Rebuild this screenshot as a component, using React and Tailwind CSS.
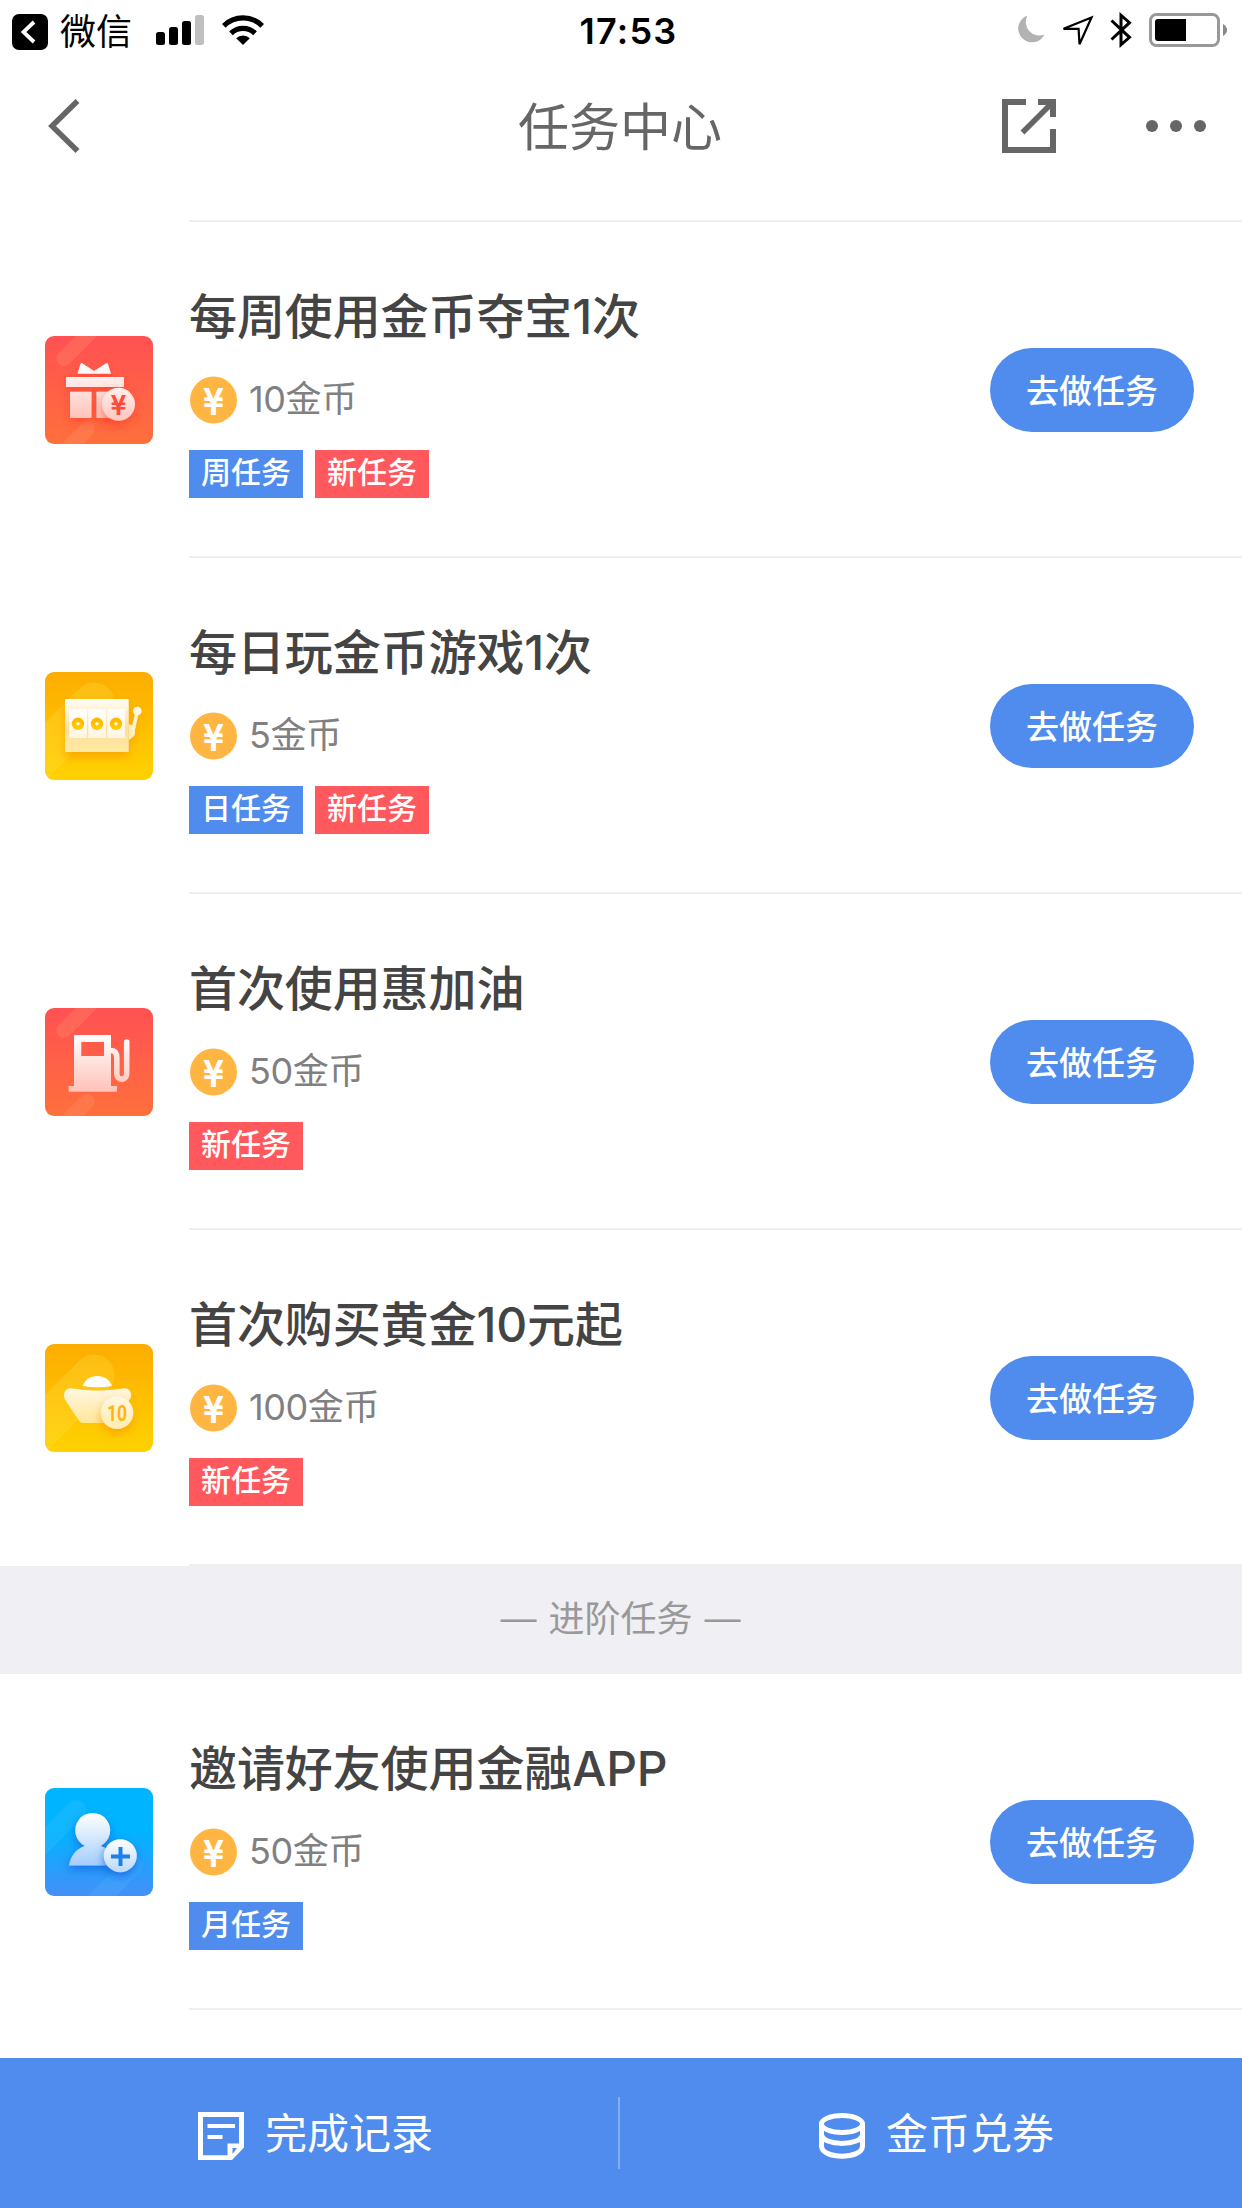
import React from 'react';

const tasks = [
  { title: '每周使用金币夺宝1次', coins: '10金币', icon: 'gift', tags: ['周任务', '新任务'] },
  { title: '每日玩金币游戏1次', coins: '5金币', icon: 'slot', tags: ['日任务', '新任务'] },
  { title: '首次使用惠加油', coins: '50金币', icon: 'fuel', tags: ['新任务'] },
  { title: '首次购买黄金10元起', coins: '100金币', icon: 'ingot', tags: ['新任务'] },
];

const advancedTasks = [
  { title: '邀请好友使用金融APP', coins: '50金币', icon: 'invite', tags: ['月任务'] },
];

// Gradients and shadows shared by all the task icons
const IconDefs = () => (
  <svg width="0" height="0" className="absolute">
    <defs>
      <linearGradient id="bgRed" x1="0" y1="0" x2="0" y2="1">
        <stop offset="0" stopColor="#ff5153" />
        <stop offset="1" stopColor="#ff703c" />
      </linearGradient>
      <linearGradient id="bgYellow" x1="0" y1="0" x2="0" y2="1">
        <stop offset="0" stopColor="#fdac00" />
        <stop offset="1" stopColor="#ffd200" />
      </linearGradient>
      <linearGradient id="bgBlue" x1="0" y1="0" x2="0" y2="1">
        <stop offset="0" stopColor="#00b4ff" />
        <stop offset="0.4" stopColor="#00b4ff" />
        <stop offset="1" stopColor="#458ff8" />
      </linearGradient>
      <linearGradient id="fgRed" gradientUnits="userSpaceOnUse" x1="0" y1="27" x2="0" y2="84">
        <stop offset="0" stopColor="#ffffff" />
        <stop offset="1" stopColor="#ffc1b8" />
      </linearGradient>
      <linearGradient id="fgYellow" gradientUnits="userSpaceOnUse" x1="0" y1="34" x2="0" y2="80">
        <stop offset="0" stopColor="#fffdf8" />
        <stop offset="1" stopColor="#ffe696" />
      </linearGradient>
      <linearGradient id="fgSlot" gradientUnits="userSpaceOnUse" x1="0" y1="27" x2="0" y2="80">
        <stop offset="0" stopColor="#fffdf8" />
        <stop offset="0.55" stopColor="#ffdfa0" />
        <stop offset="1" stopColor="#ffe9a0" />
      </linearGradient>
      <linearGradient id="reel" x1="0" y1="0" x2="0" y2="1">
        <stop offset="0" stopColor="#ffffff" />
        <stop offset="1" stopColor="#fff6e2" />
      </linearGradient>
      <linearGradient id="reelCoin" x1="0" y1="0" x2="0" y2="1">
        <stop offset="0" stopColor="#fdb400" />
        <stop offset="1" stopColor="#ffcf00" />
      </linearGradient>
      <linearGradient id="fgBlue" gradientUnits="userSpaceOnUse" x1="0" y1="25" x2="0" y2="78">
        <stop offset="0" stopColor="#ffffff" />
        <stop offset="1" stopColor="#a3cdfb" />
      </linearGradient>
      <linearGradient id="badgeBlue" x1="0" y1="0" x2="0" y2="1">
        <stop offset="0" stopColor="#ffffff" />
        <stop offset="1" stopColor="#b9d9fb" />
      </linearGradient>
      <linearGradient id="badgeRed" x1="0" y1="0" x2="0" y2="1">
        <stop offset="0" stopColor="#ffefec" />
        <stop offset="1" stopColor="#ffc6be" />
      </linearGradient>
      <linearGradient id="badgeYellow" x1="0" y1="0" x2="0" y2="1">
        <stop offset="0" stopColor="#fff7e3" />
        <stop offset="1" stopColor="#ffecad" />
      </linearGradient>
      <filter id="shadowRed" x="-40%" y="-40%" width="180%" height="190%">
        <feDropShadow dx="0" dy="4" stdDeviation="5" floodColor="#ff3a28" floodOpacity="0.6" />
      </filter>
      <filter id="shadowYellow" x="-40%" y="-40%" width="180%" height="190%">
        <feDropShadow dx="0" dy="5" stdDeviation="5" floodColor="#f89a00" floodOpacity="0.7" />
      </filter>
      <filter id="shadowBlue" x="-40%" y="-40%" width="180%" height="190%">
        <feDropShadow dx="0" dy="4" stdDeviation="5" floodColor="#1468e4" floodOpacity="0.85" />
      </filter>
    </defs>
  </svg>
);

const RedStripes = () => (
  <g stroke="#ff9a70" strokeOpacity="0.25" strokeWidth="15" strokeLinecap="round">
    <path d="M19 22.5L56 -14.5" />
    <path d="M42 93.5L14 121.5" />
  </g>
);

const YellowStripe = () => (
  <path d="M49 31L-30 110" stroke="#ffe04a" strokeOpacity="0.27" strokeWidth="41" strokeLinecap="round" />
);

const GiftIcon = () => (
  <>
    <rect width="108" height="108" fill="url(#bgRed)" />
    <RedStripes />
    <g fill="url(#fgRed)" filter="url(#shadowRed)">
      <path d="M32.5 37.8L35.5 28Q36.3 26 38 27.7L49 35L60.5 27.7Q62.3 26 63 28L66 37.8Z" />
      <rect x="21" y="41" width="58" height="10" rx="0.5" />
      <rect x="25" y="55.7" width="21.5" height="26.3" rx="0.5" />
      <rect x="51.5" y="55.7" width="23" height="26.3" rx="0.5" />
    </g>
    <circle cx="73.5" cy="68.3" r="16.5" fill="url(#badgeRed)" filter="url(#shadowRed)" />
    <text x="66" y="78.5" textLength="15" lengthAdjust="spacingAndGlyphs" fontSize="26" fontWeight="700" fontFamily="DejaVu Sans Mono, monospace" fill="#ff4a3c">¥</text>
  </>
);

const SlotIcon = () => (
  <>
    <rect width="108" height="108" fill="url(#bgYellow)" />
    <YellowStripe />
    <g filter="url(#shadowYellow)">
      <path d="M83.7 52L86.5 53.3L90 56V62Q89.5 64.5 83.7 68Z" fill="#ffeebf" />
      <path d="M92 41L88.3 57" stroke="#fff3d6" strokeWidth="3.4" />
      <circle cx="92.3" cy="39" r="4.3" fill="#fff8e8" />
      <rect x="20" y="27" width="63.7" height="53" rx="1" fill="url(#fgSlot)" />
    </g>
    {[24.3, 43.3, 62.3].map((x) => (
      <rect key={x} x={x} y="37" width="17.6" height="29" rx="0.5" fill="url(#reel)" />
    ))}
    {[33, 52, 71].map((x) => (
      <g key={x}>
        <circle cx={x} cy="51.8" r="6.2" fill="url(#reelCoin)" />
        <path d={`M${x} 50l1.8 1.8l-1.8 1.8l-1.8 -1.8z`} fill="#fff" stroke="#fff" strokeWidth="0.5" />
      </g>
    ))}
  </>
);

const FuelIcon = () => (
  <>
    <rect width="108" height="108" fill="url(#bgRed)" />
    <RedStripes />
    <path fillRule="evenodd" d="M29 27H66V78H72V83.7H23.7V78H29ZM36.3 34V48H59V34Z" fill="url(#fgRed)" />
    <path d="M66 42.5C70 42.5 71.8 45.5 71.8 50V65.5C71.8 73 81.7 73 81.7 65.5V34" fill="none" stroke="url(#fgRed)" strokeWidth="5.6" strokeLinecap="round" />
  </>
);

const IngotIcon = () => (
  <>
    <rect width="108" height="108" fill="url(#bgYellow)" />
    <YellowStripe />
    <path d="M37.8 42C40 35.5 45.5 32 52.3 32S64.6 35.5 67 42Q52.3 44.5 37.8 42Z" fill="#fff" />
    <path d="M26 44.3C35 45.5 40 46.5 52.5 46.5S70 45.5 79 44.3C85 43.8 87.5 50 85.5 54L72 77Q71 79 68.5 79H37.5Q35.5 79 34.2 77L20 55.5C17.5 50.5 20 44 26 44.3Z" fill="url(#fgYellow)" />
    <circle cx="72" cy="68.7" r="16.3" fill="url(#badgeYellow)" filter="url(#shadowYellow)" />
    <text x="62" y="77.2" textLength="20" lengthAdjust="spacingAndGlyphs" fontSize="22.5" fontWeight="700" fontFamily="Roboto, sans-serif" fill="#fdb515">10</text>
  </>
);

const InviteIcon = () => (
  <>
    <rect width="108" height="108" fill="url(#bgBlue)" />
    <g stroke="#62c8ff" strokeOpacity="0.17" strokeWidth="20" strokeLinecap="round">
      <path d="M31 22L-20 73" />
      <path d="M88 77L40 125" />
    </g>
    <path d="M24 77.5C25.5 68 31 61 39.8 58A17.5 17.5 0 1 1 55.6 58C65 61 71 68 72 77.5Z" fill="url(#fgBlue)" filter="url(#shadowBlue)" />
    <circle cx="75.3" cy="67.7" r="16.5" fill="url(#badgeBlue)" filter="url(#shadowBlue)" />
    <path d="M66 68.5H85M75.5 59V78" stroke="#1c7fec" strokeWidth="4" />
  </>
);

const icons = {
  gift: GiftIcon,
  slot: SlotIcon,
  fuel: FuelIcon,
  ingot: IngotIcon,
  invite: InviteIcon,
};

const StatusBar = () => (
  <div className="h-[60px] px-3 flex items-center relative text-black">
    <svg width="36" height="36" viewBox="0 0 36 36" className="mt-1">
      <rect width="36" height="36" rx="7" fill="#000" />
      <path d="M22 8L11.5 18L22 28" fill="none" stroke="#fff" strokeWidth="3.8" />
    </svg>
    <span className="ml-3 mt-1 text-[36px] leading-none">微信</span>
    <svg width="48" height="30" viewBox="0 0 48 30" className="ml-6">
      <rect x="0" y="17" width="9" height="13" rx="2.5" />
      <rect x="13" y="12" width="9" height="18" rx="2.5" />
      <rect x="26" y="6" width="9" height="24" rx="2.5" />
      <rect x="39" y="0" width="9" height="30" rx="2.5" fill="#bfbfbf" />
    </svg>
    <svg width="42" height="30" viewBox="0 0 42 30" className="ml-[18px]">
      <g fill="none" stroke="#000" strokeWidth="5.2">
        <path d="M1.8 10.8A27.3 27.3 0 0 1 40.2 10.8" />
        <path d="M9 18.3A17 17 0 0 1 33 18.3" />
      </g>
      <path d="M21 30L14.2 23.3A9.6 9.6 0 0 1 27.8 23.3Z" />
    </svg>
    <div className="absolute inset-x-0 top-0 h-[62px] flex items-center justify-center pl-[15px] text-[36px] font-semibold tracking-[1.2px]">17:53</div>
    <svg width="212" height="40" viewBox="0 0 212 40" className="ml-auto mr-0.5 mt-0.5">
      <path d="M11.5 4.5A13.8 13.8 0 1 0 28.5 23.5A13.5 13.5 0 0 1 11.5 4.5Z" fill="#b2b2b2" />
      <path d="M47.5 17.8L75.5 6.5L63.5 33.3L62.6 17.8Z" fill="none" stroke="#000" strokeWidth="2.2" />
      <path d="M95.5 9.5L113.5 26.3L105 33.8V4.2L113.5 11.7L95.5 28.5" fill="none" stroke="#000" strokeWidth="3" />
      <rect x="134.5" y="3.5" width="68" height="31" rx="6" fill="none" stroke="#999" strokeWidth="3" />
      <path d="M142 8H170V30H142Q139 30 139 27V11Q139 8 142 8Z" />
      <path d="M207 13Q211 15.5 211 19T207 25Z" fill="#8a8a8a" />
    </svg>
  </div>
);

const NavBar = () => (
  <div className="h-[132px] pl-12 pr-9 flex items-center justify-between relative">
    <svg width="33" height="54" viewBox="0 0 33 54" fill="none" stroke="#666" strokeWidth="5.5">
      <path d="M29.5 2L4 27L29.5 52" />
    </svg>
    <h1 className="absolute inset-0 pt-[4px] pr-0.5 flex items-center justify-center text-[51px] text-[#666] font-normal">任务中心</h1>
    <div className="flex items-center gap-[90px]">
      <svg width="54" height="54" viewBox="0 0 54 54" fill="none" stroke="#666" strokeWidth="6">
        <path d="M24 3H3V51H51V30" />
        <path d="M36 3H51V18" />
        <path d="M51 3L20.5 33.5" strokeWidth="5.5" />
      </svg>
      <svg width="60" height="12" viewBox="0 0 60 12" fill="#666">
        <circle cx="6" cy="6" r="6" />
        <circle cx="30" cy="6" r="6" />
        <circle cx="54" cy="6" r="6" />
      </svg>
    </div>
  </div>
);

const TaskRow = ({ task }) => {
  const Icon = icons[task.icon];
  return (
    <div className="h-[336px] pl-[45px] flex">
      <svg width="108" height="108" viewBox="0 0 108 108" className="mt-[114px] rounded-[9px] shrink-0">
        <Icon />
      </svg>
      <div className="ml-9 flex-1 flex justify-between border-b-2 border-[#efefef]">
        <div className="pt-[66px]">
          <h2 className="text-[48px] leading-[58px] tracking-[-0.1px] font-medium text-[#444] whitespace-nowrap">{task.title}</h2>
          <div className="mt-[30px] h-[48px] flex items-center">
            <svg width="48" height="48" viewBox="0 0 48 48" className="overflow-visible">
              <circle cx="24.5" cy="24" r="23.5" fill="#ffb541" />
              <text x="14.5" y="38.5" textLength="20" lengthAdjust="spacingAndGlyphs" fontSize="38" fontWeight="700" fontFamily="DejaVu Sans Mono, monospace" fill="#fff">¥</text>
            </svg>
            <span className="ml-3 pb-[3px] text-[36px] leading-none tracking-[-0.4px] text-[#808080]">{task.coins}</span>
          </div>
          <div className="mt-[26px] flex gap-3">
            {task.tags.map((tag) => (
              <span
                key={tag}
                className={`w-[114px] h-[48px] pb-1 flex items-center justify-center text-[30px] leading-none font-medium text-white ${tag === '新任务' ? 'bg-[#ff595e]' : 'bg-[#508cee]'}`}
              >
                {tag}
              </span>
            ))}
          </div>
        </div>
        <button className="mt-[126px] mr-12 w-[204px] h-[84px] pt-0.5 rounded-full bg-[#508cee] text-white text-[33px] font-medium leading-none">
          去做任务
        </button>
      </div>
    </div>
  );
};

const BottomBar = () => (
  <div className="h-[150px] shrink-0 bg-[#508cee] text-white text-[42px] flex items-center">
    <button className="w-[618px] pl-[13px] flex items-center justify-center gap-[21px]">
      <svg width="46" height="48" viewBox="0 0 46 48" fill="#fff" className="mt-1.5">
        <path fillRule="evenodd" d="M0 0H46V35.5L34 48H0ZM5 5V43.3H29.5V31.5H41V5ZM34.5 36V42L39 36Z" />
        <path d="M9.5 12H37V16H9.5ZM9.5 23H24.5V27H9.5Z" />
      </svg>
      <span>完成记录</span>
    </button>
    <div className="w-[2px] h-[72px] bg-white/30" />
    <button className="flex-1 pl-[11px] flex items-center justify-center gap-[21px]">
      <svg width="46" height="46" viewBox="0 0 46 46" fill="none" stroke="#fff" strokeWidth="5" className="mt-1.5">
        <ellipse cx="23" cy="11" rx="20.5" ry="8.5" />
        <path d="M2.5 11V33C2.5 46.5 43.5 46.5 43.5 33V11" />
        <path d="M2.5 21C2.5 33.5 43.5 33.5 43.5 21" />
      </svg>
      <span>金币兑券</span>
    </button>
  </div>
);

export default function App() {
  return (
    <div className="w-[1242px] h-[2208px] flex flex-col bg-white overflow-hidden font-[Inter,'Noto_Sans_CJK_SC',sans-serif]">
      <IconDefs />
      <StatusBar />
      <NavBar />
      <div className="flex-1 min-h-0 overflow-hidden">
        <div className="ml-[189px] h-[30px] border-b-2 border-[#efefef]" />
        {tasks.map((task) => (
          <TaskRow key={task.title} task={task} />
        ))}
        <div className="h-[108px] pb-[5px] pr-px bg-[#efeff4] flex items-center justify-center gap-3 text-[36px] leading-none text-[#999] font-['Liberation_Sans','Noto_Sans_CJK_SC',sans-serif]">
          <span>—</span>
          <span className="pt-[5px]">进阶任务</span>
          <span>—</span>
        </div>
        {advancedTasks.map((task) => (
          <TaskRow key={task.title} task={task} />
        ))}
      </div>
      <BottomBar />
    </div>
  );
}
